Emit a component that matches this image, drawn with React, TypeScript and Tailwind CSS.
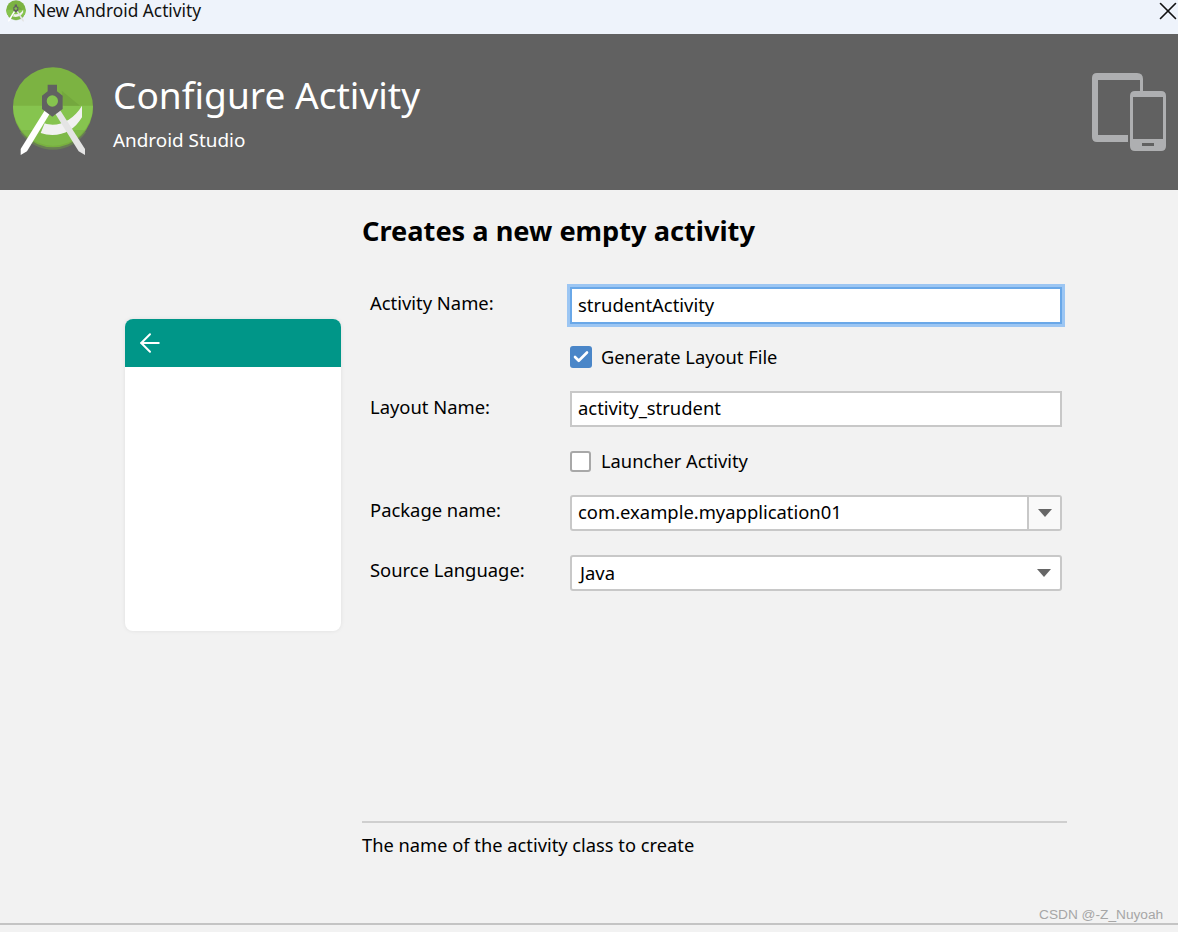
import { ArrowLeft, Check, X } from "lucide-react"

const font = "font-['Noto_Sans','Open_Sans',sans-serif]"

function Logo({ className }: { className: string }) {
  return (
    <svg viewBox="0 0 330 330" className={className}>
      <circle cx="159" cy="160" r="120" fill="#7cb342" />
      <path d="M39 155 H279 A120 120 0 0 1 39 155 Z" fill="#86c44f" />
      <path d="M185 110 L240 155 H190 Z" fill="#74a83e" />
      <path d="M60 235 A120 120 0 0 0 258 235 L250 228 H68 Z" fill="#74ab3f" opacity="0.4" />
      <path d="M246 155 V190 C225 225 195 243 157 243 C145 243 133 241 122 237 L134 208 C142 211 150 212 158 212 C190 212 225 190 246 155 Z" fill="#f1f1f1" />
      <path d="M62 285 L135 168 L150 178 L81 292 L62 303 Z" fill="#ffffff" />
      <path d="M255 285 L180 168 L165 178 L236 292 L255 303 Z" fill="#e4e4e4" />
      <path d="M143 92 H171 V112 L188 125 V165 L157 188 L126 165 V125 L143 112 Z" fill="#616161" />
      <circle cx="157" cy="141" r="17" fill="#86c44f" />
    </svg>
  )
}

function DeviceIcon() {
  return (
    <svg viewBox="0 0 78 80" className="h-20 w-[78px]">
      <path d="M7 1 H47 Q53 1 53 7 V19 H50 V8 H8 V63 H38 V70 H7 Q2 70 2 65 V6 Q2 1 7 1 Z" fill="#aeafb1" />
      <path fillRule="evenodd" d="M45 19 H71 Q76 19 76 24 V74 Q76 79 71 79 H45 Q40 79 40 74 V24 Q40 19 45 19 Z M43 25 V67 H73 V25 Z M52 71 V74 H64 V71 Z" fill="#aeafb1" />
    </svg>
  )
}

function Caret() {
  return <div className="h-0 w-0 border-x-[7px] border-t-[8px] border-x-transparent border-t-[#666666]" />
}

function TextRow({ label, value, focused }: { label: string; value: string; focused?: boolean }) {
  return (
    <div className="flex h-9 items-start">
      <div className="w-[208px] pl-2 pt-[4px] text-[18.4px] leading-6">{label}</div>
      <div
        className={
          focused
            ? "flex h-[37px] w-[492px] items-center border-2 border-[#6aa8e8] bg-white pb-[2px] pl-[6px] shadow-[0_0_0_3px_#9cc6f3]"
            : "flex h-9 w-[492px] items-center border-2 border-[#c8c8c8] bg-white pb-[2px] pl-[6px]"
        }
      >
        {value}
      </div>
    </div>
  )
}

function CheckRow({ label, checked }: { label: string; checked?: boolean }) {
  return (
    <div className="ml-[208px] flex h-[22px] items-center text-[18.3px]">
      {checked ? (
        <div className="mr-[9px] flex h-[22px] w-[22px] items-center justify-center rounded-[3px] bg-[#4a86c8]">
          <Check className="h-[18px] w-[18px] text-white" strokeWidth={3.5} />
        </div>
      ) : (
        <div className="mr-[10px] h-[21px] w-[21px] rounded-[3px] border-2 border-[#a8a8a8] bg-white" />
      )}
      <span className="leading-[22px]">{label}</span>
    </div>
  )
}

function SelectRow({ label, value, split }: { label: string; value: string; split?: boolean }) {
  return (
    <div className="flex h-9 items-start">
      <div className="w-[208px] pl-2 pt-[3px] text-[18.4px] leading-6">{label}</div>
      <div className="flex h-9 w-[492px] items-center rounded-[3px] border-2 border-[#c8c8c8] bg-white">
        <div className={split ? "flex-1 pb-[2px] pl-[6px]" : "flex-1 pl-2"}>{value}</div>
        {split ? (
          <div className="flex h-full w-[33px] items-center justify-center border-l-2 border-[#c8c8c8] bg-[#f9f9f9]">
            <Caret />
          </div>
        ) : (
          <div className="flex h-full w-[33px] items-center justify-center">
            <Caret />
          </div>
        )}
      </div>
    </div>
  )
}

export default function App() {
  return (
    <div className={`relative flex h-[932px] w-[1178px] flex-col overflow-hidden bg-[#f2f2f2] text-[18.4px] text-black ${font}`}>
      <div className="flex h-[34px] items-start justify-between bg-[#eef3fb]">
        <div className="flex items-center">
          <Logo className="-mt-[3px] ml-[3px] h-[27px] w-[27px]" />
          <span className="ml-[3px] -mt-[3px] text-[17.3px] leading-6 text-[#111111]">New Android Activity</span>
        </div>
        <X className="-mr-[5px] -mt-[4px] h-[30px] w-[30px] text-[#111111]" strokeWidth={1.3} />
      </div>

      <header className="flex h-[156px] items-start justify-between bg-[#616161] pr-[10px]">
        <div className="flex items-start">
          <Logo className="mt-[20px] h-[110px] w-[110px]" />
          <div className="ml-[3px] text-white">
            <div className="mt-[32px] text-[37.1px] leading-[58px]">Configure Activity</div>
            <div className="mt-[4px] text-[18.9px] leading-6">Android Studio</div>
          </div>
        </div>
        <div className="mt-[38px]">
          <DeviceIcon />
        </div>
      </header>

      <main className="flex h-[735px] border-b-2 border-[#c4c4c4]">
        <aside className="w-[362px] pl-[125px] pt-[129px]">
          <div className="h-[312px] w-[216px] overflow-hidden rounded-lg bg-white shadow-[0_0_4px_rgba(0,0,0,0.08)]">
            <div className="flex h-12 items-center bg-[#009688] pl-[10px]">
              <ArrowLeft className="h-[30px] w-[30px] text-white" strokeWidth={1.6} />
            </div>
          </div>
        </aside>

        <section className="flex w-[705px] flex-col">
          <h1 className="mt-[22px] text-[27.2px] font-bold leading-[38px]">Creates a new empty activity</h1>
          <div className="mt-[37px] flex w-[700px] flex-col">
            <TextRow label="Activity Name:" value="strudentActivity" focused />
            <div className="mt-[23px]">
              <CheckRow label="Generate Layout File" checked />
            </div>
            <div className="mt-[23px]">
              <TextRow label="Layout Name:" value="activity_strudent" />
            </div>
            <div className="mt-[23px]">
              <CheckRow label="Launcher Activity" />
            </div>
            <div className="mt-[23px]">
              <SelectRow label="Package name:" value="com.example.myapplication01" split />
            </div>
            <div className="mt-[24px]">
              <SelectRow label="Source Language:" value="Java" />
            </div>
          </div>
          <div className="mt-auto border-t-2 border-[#cfcfcf] pb-[66px] pt-[10px] text-[18.3px] leading-6">
            The name of the activity class to create
          </div>
        </section>
      </main>

      <div className="absolute left-[1039px] top-[906px] font-['Liberation_Sans',sans-serif] text-[13.7px] leading-[18px] text-[#a6a6a6]">
        CSDN @-Z_Nuyoah
      </div>
    </div>
  )
}
